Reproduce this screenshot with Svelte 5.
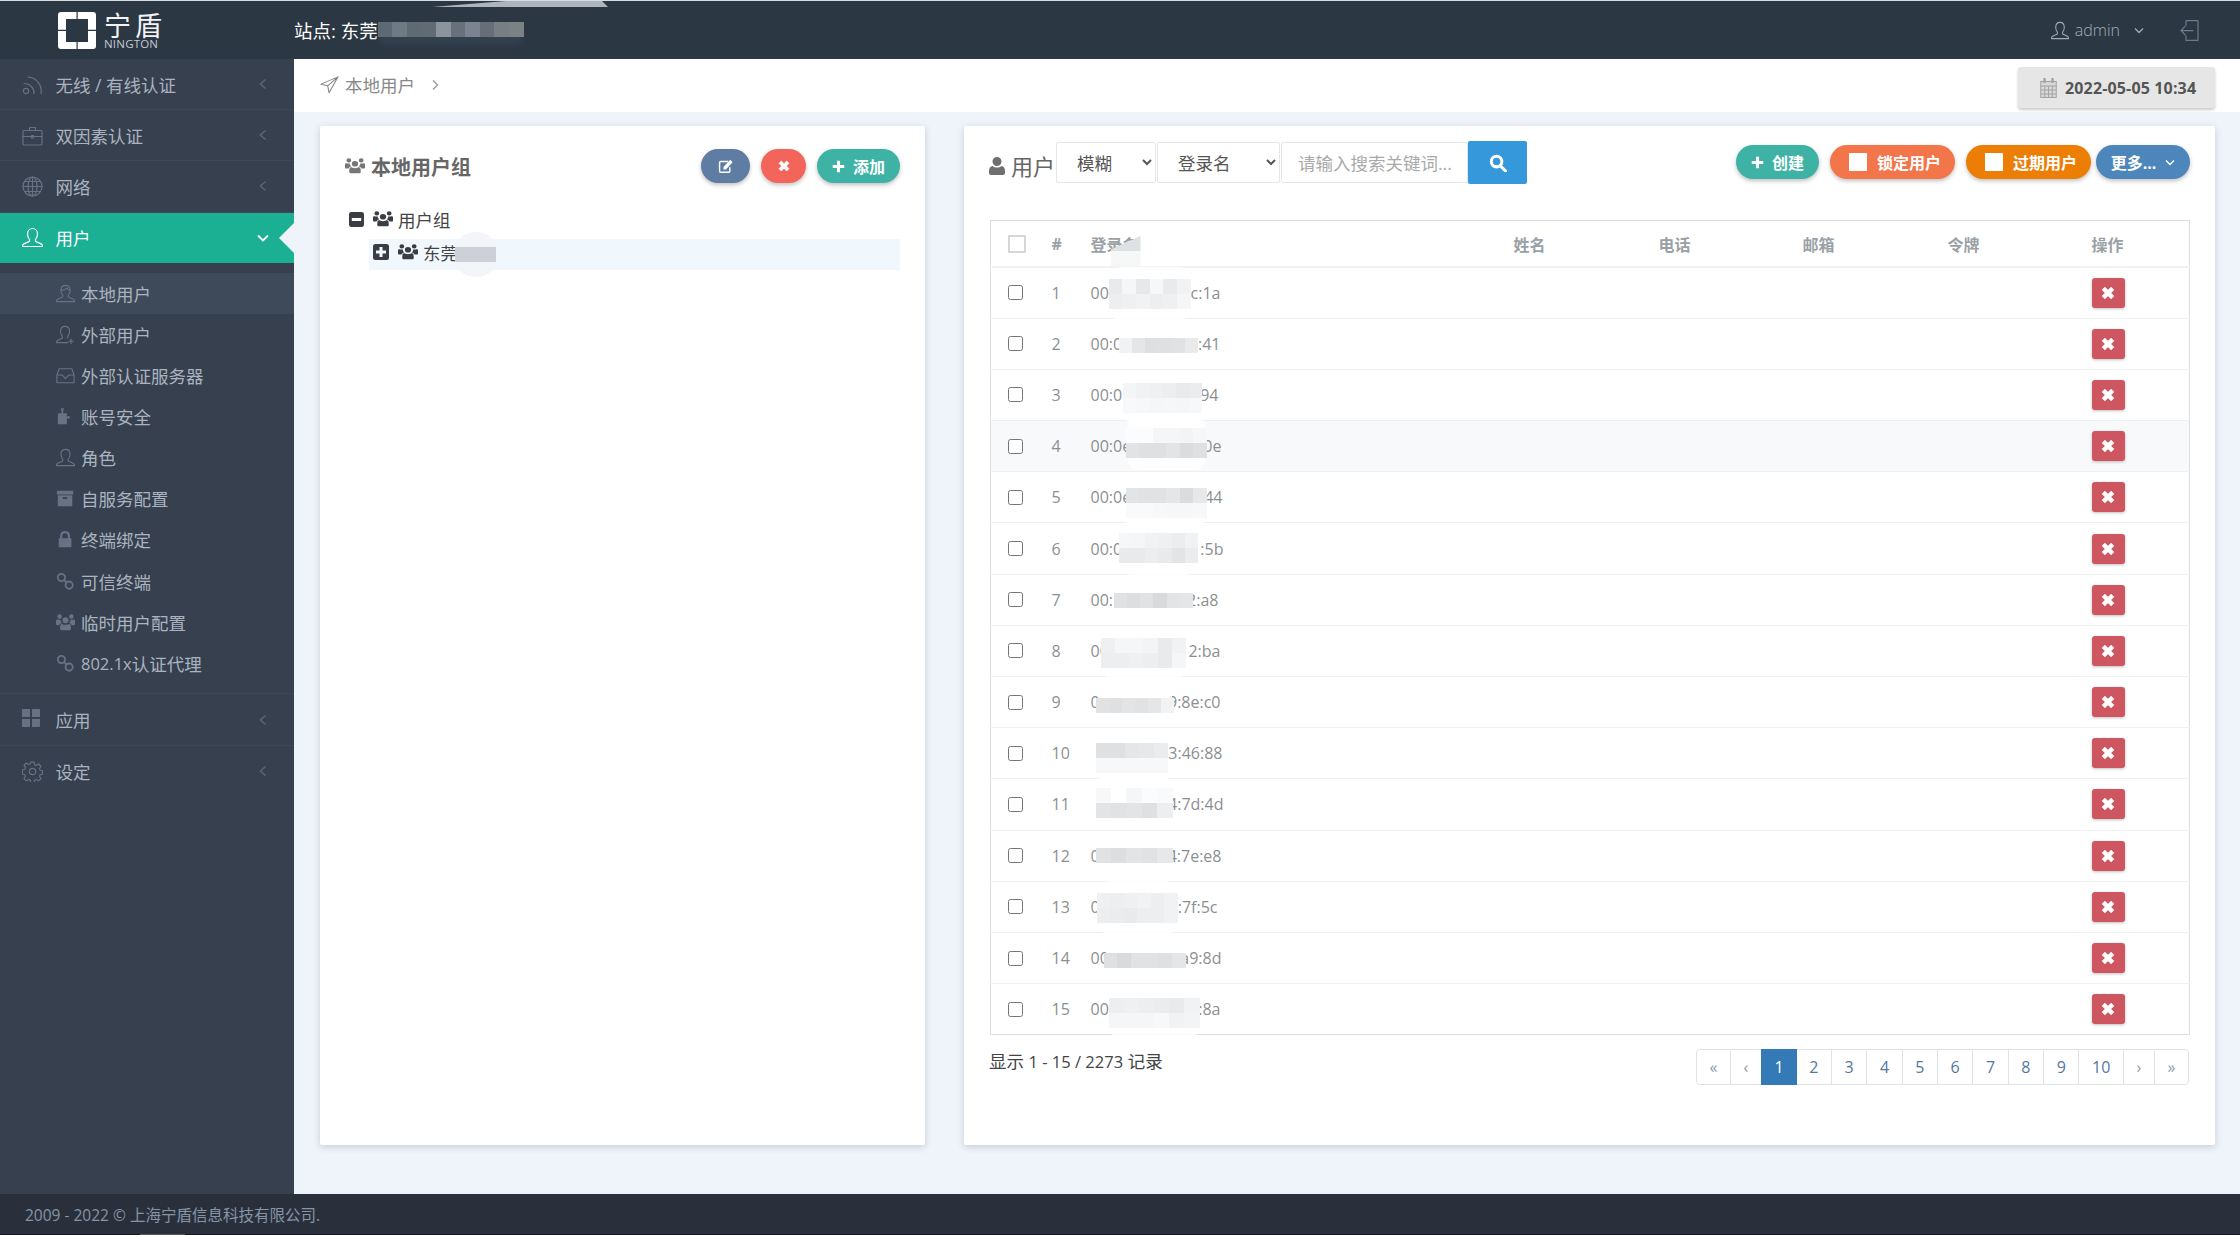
<script lang="ts">
  const line = 'fill="none" stroke="currentColor" stroke-width="1.2" stroke-linejoin="round" stroke-linecap="round"';
  const userShape = 'M10.5 1.5c-3 0-5 2.4-5 5.6 0 2.1.8 4 2 5.2v2.1l-5.6 2.5c-1 .5-1.4 1.4-1.4 2.6h20c0-1.2-.4-2.1-1.4-2.6l-5.6-2.5v-2.1c1.2-1.200 2-3.100 2-5.200 0-3.200-2-5.600-5-5.600z';
  const icons: Record<string, string> = {
    rss: `<g ${line}><circle cx="4" cy="17" r="2.6"/><path d="M2 9.500a9.500 9.500 0 0 1 10 10"/><path d="M6 3a14 14 0 0 1 13 16.500"/></g>`,
    case: `<g ${line}><rect x="1" y="5.500" width="19" height="14.500" rx="1"/><path d="M7.500 5.500V2.500h6v3M1 11.500h19M9.500 10.500h2v2.500h-2z"/></g>`,
    globe: `<g ${line}><circle cx="10.500" cy="10.500" r="9.500"/><ellipse cx="10.500" cy="10.500" rx="4.500" ry="9.500"/><path d="M10.500 1v19M1 10.500h19M2.500 5.500h16M2.500 15.500h16"/></g>`,
    user: `<path ${line} d="${userShape}"/>`,
    female: `<g ${line}><path d="${userShape}"/><path d="M5.500 7c3 0 5-1 6.500-2.500 1 1.500 2 2.200 3.500 2.500"/></g>`,
    follow: `<g ${line}><path d="M10 1.500c-3 0-5 2.400-5 5.600 0 2.100.8 4 2 5.200v2.100l-5 2.500c-1 .5-1.400 1.400-1.400 2.600h12"/><path d="M10 1.500c3 0 5 2.400 5 5.600 0 2.100-.8 4-2 5.200v2M16.500 15.500v5M14 18h5"/></g>`,
    inbox: `<g ${line}><path d="M3.500 3h14l2.500 7v8.500H1V10zM1 10h6l3.500 4 3.500-4h6"/></g>`,
    puzzle: `<path fill="currentColor" d="M2 7h4V4.500C6 3 5 3 5.500 1.500h3C9 3 8 3 8 4.500V7h4v3.500c1.500 0 1.500-1 3-.5v3c-1.500.5-1.500-.5-3-.5V19H2z"/>`,
    archive: `<path fill="currentColor" d="M1 2h18v4H1zM2 7h16v12H2zM7.500 9v2h5V9z" fill-rule="evenodd"/>`,
    lock: `<path fill="currentColor" fill-rule="evenodd" d="M3 9h1.500V6.500a5.500 5.500 0 0 1 11 0V9H17v10H3zM7 9h6V6.500a3 3 0 0 0-6 0z"/>`,
    link: `<g fill="none" stroke="currentColor" stroke-width="2"><circle cx="6" cy="6" r="4"/><circle cx="14.500" cy="14.500" r="4"/><path d="M8.500 8.500l3.500 3.500"/></g>`,
    users: `<path fill="currentColor" d="M10.500 4.600a3.300 3.300 0 1 1 0 6.600 3.300 3.300 0 0 1 0-6.600zM4 1.500a2.500 2.500 0 1 1 0 5 2.500 2.500 0 0 1 0-5zM17 1.500a2.500 2.500 0 1 1 0 5 2.500 2.500 0 0 1 0-5zM0 8.500c0-1 1-1.500 2-1.200.8.400 1.700.4 2.700 0 .2 1.500.8 2.700 1.800 3.500-1.300.5-2.300 1.400-2.800 2.700H1c-.6 0-1-.5-1-1zM21 8.500c0-1-1-1.500-2-1.200-.8.400-1.700.4-2.700 0-.2 1.500-.8 2.700-1.800 3.500 1.300.5 2.300 1.400 2.800 2.700H20c.6 0 1-.5 1-1zM6.500 11.800c1 .9 2.500 1.300 4 1.300s3-.4 4-1.300c1.200.4 2 1.800 2 3.700v2c0 1-.7 1.500-1.500 1.500H6c-.8 0-1.500-.5-1.500-1.500v-2c0-1.900.8-3.300 2-3.700z"/>`,
    grid: `<path fill="currentColor" d="M0 1a1 1 0 0 1 1-1h7v8H0zM10 0h7a1 1 0 0 1 1 1v7h-8zM0 10h8v8H1a1 1 0 0 1-1-1zM10 10h8v7a1 1 0 0 1-1 1h-7z"/>`,
    gear: `<g ${line}><circle cx="10.500" cy="10.500" r="3.200"/><path d="M8.800 1h3.400l.6 2.700 1.700.7 2.400-1.500 2.400 2.400-1.500 2.400.7 1.700 2.500.6v3.400l-2.500.6-.7 1.700 1.500 2.400-2.400 2.400-2.400-1.500-1.700.7-.6 2.700H8.800l-.6-2.700-1.700-.7-2.400 1.500-2.400-2.400 1.500-2.400-.7-1.700-2.500-.6V9l2.500-.6.7-1.700-1.500-2.400 2.400-2.400 2.400 1.500 1.700-.7z" transform="scale(.96) translate(.4 .2)"/></g>`,
    plane: `<g ${line}><path d="M20 1L1 9.500l7.500 2 1.500 8zM20 1L8.500 11.500"/></g>`,
    calendar: `<g fill="none" stroke="currentColor" stroke-width="1.100"><rect x=".8" y="3.500" width="16.400" height="16" fill="currentColor" fill-opacity=".2"/><path d="M.8 8h16.400M.8 12h16.400M.8 16h16.400M5 8v11.500M9 8v11.500M13 8v11.500"/></g><path fill="currentColor" d="M3.500 0h2.500v5H3.500zM12 0h2.500v5H12z"/>`,
    logout: `<g ${line}><path d="M7 6V1.500h12V20.500H7V16M14 11H2M6 7l-4 4 4 4"/></g>`,
    edit: `<path fill="none" stroke="currentColor" stroke-width="1.800" d="M13 3H3.500A1.500 1.500 0 0 0 2 4.500v10A1.500 1.500 0 0 0 3.500 16h10a1.500 1.500 0 0 0 1.500-1.500V10"/><path fill="currentColor" d="M15.500 1l3 3L10 12.500H7V9.500z"/>`,
    times: `<path fill="currentColor" stroke="currentColor" stroke-width="1" stroke-linejoin="round" d="M1.500 5L5 1.500 9 5.500 13 1.500 16.500 5 12.500 9 16.500 13 13 16.500 9 12.500 5 16.500 1.500 13 5.500 9z"/>`,
    plus: `<path fill="currentColor" d="M6.500 1h4v5.500H16v4h-5.500V16h-4v-5.500H1v-4h5.500z"/>`,
    search: `<g fill="none" stroke="currentColor" stroke-width="3.200"><circle cx="8" cy="8" r="5.600"/><path d="M12 12.500l5.500 5.500" stroke-linecap="round"/></g>`,
    person: `<path fill="currentColor" d="M8 1a4.500 4.500 0 1 1 0 9 4.500 4.500 0 0 1 0-9zM3.500 10c1.200 1 2.800 1.500 4.500 1.500s3.300-.5 4.500-1.500c2 .3 3.500 2.200 3.500 5v2c0 1.200-.9 2-2 2H2c-1.100 0-2-.8-2-2v-2c0-2.800 1.500-4.700 3.500-5z"/>`,
    box: `<path fill="currentColor" fill-rule="evenodd" d="M2.500 0h11A2.500 2.500 0 0 1 16 2.500v11a2.500 2.500 0 0 1-2.500 2.500h-11A2.500 2.500 0 0 1 0 13.500v-11A2.500 2.500 0 0 1 2.500 0zM3 6.500v3h10v-3z"/>`,
    boxplus: `<path fill="currentColor" fill-rule="evenodd" d="M2.500 0h11A2.500 2.500 0 0 1 16 2.500v11a2.500 2.500 0 0 1-2.500 2.500h-11A2.500 2.500 0 0 1 0 13.500v-11A2.500 2.500 0 0 1 2.500 0zM6.500 3v3.500H3v3h3.500V13h3V9.500H13v-3H9.500V3z"/>`
  };

  const top1 = [
    { icon: 'rss', label: '无线 / 有线认证' },
    { icon: 'case', label: '双因素认证' },
    { icon: 'globe', label: '网络' }
  ];
  const subs = [
    { icon: 'female', label: '本地用户', current: true },
    { icon: 'follow', label: '外部用户' },
    { icon: 'inbox', label: '外部认证服务器' },
    { icon: 'puzzle', label: '账号安全' },
    { icon: 'user', label: '角色' },
    { icon: 'archive', label: '自服务配置' },
    { icon: 'lock', label: '终端绑定' },
    { icon: 'link', label: '可信终端' },
    { icon: 'users', label: '临时用户配置' },
    { icon: 'link', label: '802.1x', tail: '认证代理' }
  ];
  const top2 = [
    { icon: 'grid', label: '应用' },
    { icon: 'gear', label: '设定' }
  ];

  // prefix, suffix, text end x, mosaic x / y / width, tile tones
  const rows = [
    { pre: '00:', suf: 'c:1a', end: 1220, x: 1108, y: 277, w: 82, tiles: [[232, 244, 230, 245, 232, 240], [236, 238, 240, 236, 238, 244]] },
    { pre: '00:0', suf: ':41', end: 1220, x: 1118, y: 337, w: 80, tiles: [[240, 228, 221, 222, 224, 232]] },
    { pre: '00:0', suf: '94', end: 1218, x: 1122, y: 382, w: 80, tiles: [[243, 240, 238, 236, 232, 234], [247, 246, 244, 245, 244, 246]] },
    { pre: '00:0e', suf: '0e', end: 1221, x: 1125, y: 427, w: 81, tiles: [[250, 250, 244, 244, 242, 245], [225, 222, 222, 226, 218, 222]] },
    { pre: '00:0e', suf: '44', end: 1222, x: 1125, y: 487, w: 81, tiles: [[226, 224, 224, 228, 218, 230], [248, 248, 246, 245, 245, 246]] },
    { pre: '00:0', suf: ':5b', end: 1223, x: 1118, y: 532, w: 80, tiles: [[245, 244, 240, 238, 235, 240], [232, 232, 235, 232, 226, 234]] },
    { pre: '00:', suf: '2:a8', end: 1218, x: 1113, y: 592, w: 80, tiles: [[224, 220, 224, 216, 226, 228]] },
    { pre: '00', suf: '2:ba', end: 1220, x: 1100, y: 637, w: 86, tiles: [[238, 244, 244, 242, 232, 240], [236, 236, 238, 236, 232, 244]] },
    { pre: '0', suf: '9:8e:c0', end: 1220, x: 1095, y: 697, w: 78, tiles: [[224, 222, 226, 224, 228, 240]] },
    { pre: '', suf: '3:46:88', end: 1222, x: 1095, y: 742, w: 73, tiles: [[222, 222, 228, 230, 234], [246, 246, 246, 246, 246]] },
    { pre: '', suf: '4:7d:4d', end: 1223, x: 1095, y: 787, w: 77, tiles: [[246, 255, 244, 250, 248], [226, 224, 226, 222, 236]] },
    { pre: '0', suf: '4:7e:e8', end: 1221, x: 1095, y: 847, w: 77, tiles: [[224, 220, 226, 224, 230]] },
    { pre: '0', suf: ':7f:5c', end: 1217, x: 1096, y: 892, w: 81, tiles: [[238, 236, 238, 240, 236, 240], [236, 234, 232, 236, 236, 240]] },
    { pre: '00', suf: 'a9:8d', end: 1221, x: 1103, y: 952, w: 82, tiles: [[222, 216, 224, 224, 222, 228]] },
    { pre: '00', suf: ':8a', end: 1220, x: 1108, y: 997, w: 91, tiles: [[236, 238, 236, 234, 232, 240], [244, 244, 244, 246, 240, 242]] }
  ];
  const siteTiles = ['#5d6a75', '#6e7b84', '#5f6a72', '#606b73', '#8b949e', '#68707b', '#7c8390', '#676e79', '#777f85', '#7b8184'];
  const pages = ['«', '‹', '1', '2', '3', '4', '5', '6', '7', '8', '9', '10', '›', '»'];
</script>

{#snippet icon(name: string, w: number, h: number, vb = '0 0 21 21')}
  <svg class="ico" width={w} height={h} viewBox={vb} preserveAspectRatio="none" aria-hidden="true">{@html icons[name]}</svg>
{/snippet}

{#snippet chevron(cls: string)}
  <svg class={cls} width="10" height="12" viewBox="0 0 10 12" aria-hidden="true"><path d="M7.500 1.500L2.500 6l5 4.500" fill="none" stroke="currentColor" stroke-width="1.600"/></svg>
{/snippet}

{#snippet mainItem(item: { icon: string; label: string })}
  <a class="item">
    <span class="item-ico">{@render icon(item.icon, 21, 21)}</span>
    <span>{item.label}</span>
    {@render chevron('arrow')}
  </a>
{/snippet}

<div class="app">
  <header class="topbar">
    <div class="logo">
      <svg class="logo-mark" width="38" height="37" viewBox="0 0 38 37" aria-hidden="true">
        <path fill="#fff" fill-rule="evenodd" d="M3 0h32a3 3 0 0 1 3 3v31a3 3 0 0 1-3 3H3a3 3 0 0 1-3-3V3a3 3 0 0 1 3-3zM8 7v23h22V7z"/>
        <path fill="#2c3744" d="M18.500 0h1.200v7h-1.200zM18.500 30h1.200v7h-1.200zM0 17.800h8V19H0zM30 17.800h8V19h-8z"/>
      </svg>
      <div class="logo-text">
        <span class="logo-cn">宁盾</span>
        <span class="logo-en">NINGTON</span>
      </div>
    </div>
    <div class="site">
      <span>站点: 东莞</span>
      <span class="site-mask">
        {#each siteTiles as t}<i style="background:{t}"></i>{/each}
      </span>
    </div>
    <svg class="scrap" width="180" height="7" viewBox="0 0 180 7" aria-hidden="true"><path fill="#aeb4bf" d="M0 6L74 0h96l6 6z"/></svg>
    <div class="top-right">
      <span class="admin">{@render icon('user', 18, 19)} admin
        <svg width="10" height="7" viewBox="0 0 10 7" aria-hidden="true"><path d="M1 1.500l4 4 4-4" fill="none" stroke="currentColor" stroke-width="1.300"/></svg>
      </span>
      <span class="logout">{@render icon('logout', 21, 22)}</span>
    </div>
  </header>

  <div class="body">
    <aside class="sidebar">
      {#each top1 as item}
        {@render mainItem(item)}
      {/each}
      <a class="item active">
        <span class="item-ico">{@render icon('user', 21, 21)}</span>
        <span>用户</span>
        <svg class="arrow-down" width="12" height="8" viewBox="0 0 12 8" aria-hidden="true"><path d="M1 1.500l5 5 5-5" fill="none" stroke="currentColor" stroke-width="1.800"/></svg>
      </a>
      <nav class="submenu">
        {#each subs as s}
          <a class="sub" class:current={s.current}>
            <span class="sub-ico">{@render icon(s.icon, 19, 19)}</span>
            <span class:latin={s.tail}>{s.label}</span>{#if s.tail}<span>{s.tail}</span>{/if}
          </a>
        {/each}
      </nav>
      {#each top2 as item}
        {@render mainItem(item)}
      {/each}
    </aside>

    <main class="main">
      <div class="crumbs">
        <div class="crumb-path">
          {@render icon('plane', 19, 18)}
          <span>本地用户</span>
          <svg width="8" height="12" viewBox="0 0 8 12" aria-hidden="true"><path d="M2 1.500L6.500 6 2 10.500" fill="none" stroke="currentColor" stroke-width="1.300"/></svg>
        </div>
        <div class="date">{@render icon('calendar', 17, 20, '0 0 18 20')} 2022-05-05 10:34</div>
      </div>

      <div class="cards">
        <section class="card groups">
          <div class="groups-head">
            <h3>{@render icon('users', 20, 18)} 本地用户组</h3>
            <div class="btns">
              <button class="pill edit">{@render icon('edit', 15, 15, '0 0 19 18')}</button>
              <button class="pill del">{@render icon('times', 12, 12, '0 0 18 18')}</button>
              <button class="pill add">{@render icon('plus', 13, 13, '0 0 17 17')} 添加</button>
            </div>
          </div>
          <div class="tree">
            <div class="node root">
              {@render icon('box', 15, 15, '0 0 16 16')}
              {@render icon('users', 20, 18)}
              <span>用户组</span>
            </div>
            <div class="node child">
              {@render icon('boxplus', 16, 16, '0 0 16 16')}
              {@render icon('users', 20, 18)}
              <span>东莞</span>
              <span class="node-blur"><i></i></span>
            </div>
          </div>
        </section>

        <section class="card users">
          <div class="toolbar">
            <h3>{@render icon('person', 16, 19, '0 0 16 19')} 用户</h3>
            <select class="match"><option>模糊</option></select>
            <select class="field"><option>登录名</option></select>
            <input class="search" placeholder="请输入搜索关键词..." />
            <button class="search-btn" aria-label="搜索">{@render icon('search', 18, 18, '0 0 19 19')}</button>
            <div class="actions">
              <button class="pill add create">{@render icon('plus', 13, 13, '0 0 17 17')} 创建</button>
              <button class="pill lock"><b class="sq"></b>锁定用户</button>
              <button class="pill expire"><b class="sq"></b>过期用户</button>
              <button class="pill more">更多...
                <svg width="10" height="7" viewBox="0 0 10 7" aria-hidden="true"><path d="M1 1.500l4 4 4-4" fill="none" stroke="currentColor" stroke-width="1.400"/></svg>
              </button>
            </div>
          </div>

          <table>
            <colgroup>
              <col style="width:50px" /><col style="width:40px" /><col style="width:423px" /><col style="width:145px" />
              <col style="width:144px" /><col style="width:145px" /><col style="width:144px" /><col style="width:108px" />
            </colgroup>
            <thead>
              <tr>
                <th class="cb"><span class="check-head"></span></th>
                <th class="num">#</th>
                <th class="login">登录名<span class="head-mask"></span></th>
                <th>姓名</th><th>电话</th><th>邮箱</th><th>令牌</th><th>操作</th>
              </tr>
            </thead>
            <tbody>
              {#each rows as r, i}
                <tr class:hover={i === 3}>
                  <td class="cb"><input type="checkbox" /></td>
                  <td class="num">{i + 1}</td>
                  <td class="login">
                    <div class="mac" style="width:{r.end - 1090}px"><span>{r.pre}</span><span>{r.suf}</span></div>
                    <div class="mask" style="left:{r.x - 1080}px; top:{r.y - 266 - 51.2 * i}px; width:{r.w}px">
                      {#each r.tiles as tr}
                        <div class="tile-row">
                          {#each tr as t}<i style="background:rgb({t},{t + 2},{t + 3})"></i>{/each}
                        </div>
                      {/each}
                    </div>
                  </td>
                  <td></td><td></td><td></td><td></td>
                  <td><button class="row-del" aria-label="删除">{@render icon('times', 14, 14, '0 0 18 18')}</button></td>
                </tr>
              {/each}
            </tbody>
          </table>

          <div class="table-foot">
            <span class="count">显示 <span class="latin">1 - 15 / 2273</span> 记录</span>
            <ul class="pager">
              {#each pages as p}
                <li class:on={p === '1'} class:sym={isNaN(Number(p))}>{p}</li>
              {/each}
            </ul>
          </div>
        </section>
      </div>
    </main>
  </div>

  <footer class="foot">2009 - 2022 © 上海宁盾信息科技有限公司.</footer>
</div>

<style>
  :global(body) { margin: 0; background: #eff3fa; }
  .app {
    height: 100vh;
    min-height: 1235px;
    display: flex;
    flex-direction: column;
    font-family: "Open Sans", "Noto Sans CJK SC", sans-serif;
    font-size: 17.5px;
    color: #555;
    overflow: hidden;
  }
  .ico { flex: none; display: inline-block; vertical-align: -2px; }
  .latin { font-size: 16.500px; }

  .topbar {
    flex: 0 0 59px;
    box-sizing: border-box;
    position: relative;
    display: flex;
    align-items: center;
    background: #2c3744;
    border-top: 1px solid #d9dce0;
    color: #fff;
  }
  .logo { width: 294px; display: flex; align-items: center; padding-left: 58px; box-sizing: border-box; gap: 8px; }
  .logo-mark { flex: none; }
  .logo-text { display: flex; flex-direction: column; line-height: 1; }
  .logo-cn { font-size: 27px; height: 27px; line-height: 27px; letter-spacing: 4px; color: #f2f3f5; }
  .logo-en { font-size: 11.500px; line-height: 10px; height: 10px; color: #c4c9ce; letter-spacing: .2px; }
  .site { display: flex; align-items: center; font-size: 18.500px; position: relative; }
  .site-mask { display: flex; height: 15px; width: 146px; margin-top: -1px; box-shadow: 0 9px 6px -2px #354250; }
  .site-mask i { flex: 1; }
  .scrap { position: absolute; left: 432px; top: 0; }
  .top-right { margin-left: auto; display: flex; align-items: center; color: #a3acb8; }
  .admin { display: flex; align-items: center; gap: 6px; font-size: 16px; font-weight: 300; }
  .admin svg:last-child { margin-left: 8px; }
  .logout { margin: 0 40px 0 35px; color: #6d7a8a; display: flex; }

  .body { flex: 1; display: flex; min-height: 0; }
  .sidebar { flex: 0 0 294px; background: #36404f; color: #aab3bf; }
  .item {
    height: 51.200px;
    box-sizing: border-box;
    display: flex;
    align-items: center;
    position: relative;
    border-bottom: 1px solid #3d4757;
    padding-left: 22px;
    font-size: 17.500px;
  }
  .item:last-child { border-bottom: 0; }
  .item-ico { width: 33.500px; color: #667282; display: flex; }
  .arrow { position: absolute; left: 258px; color: #596575; }
  .item.active { background: #1bb094; color: #fff; height: 50px; border: 0; }
  .item.active .item-ico { color: #fff; }
  .item.active::after {
    content: "";
    position: absolute;
    right: 0;
    top: 10px;
    border-style: solid;
    border-width: 15px 15px 15px 0;
    border-color: transparent #eff3fa transparent transparent;
  }
  .arrow-down { position: absolute; left: 257px; color: #fff; }
  .submenu { padding: 10px 0 9.500px; border-bottom: 1px solid #3d4757; }
  .sub { height: 41.150px; display: flex; align-items: center; padding-left: 56px; position: relative; }
  .sub.current { background: #3e4a5a; }
  .sub-ico { width: 25px; color: #677384; display: flex; }

  .main { flex: 1; min-width: 0; display: flex; flex-direction: column; }
  .crumbs {
    flex: 0 0 53px;
    background: #fff;
    display: flex;
    align-items: center;
    justify-content: space-between;
    padding: 0 25px 0 26px;
  }
  .crumb-path { display: flex; align-items: center; gap: 6px; color: #888; padding-bottom: 2px; }
  .crumb-path svg:last-child { margin-left: 10px; color: #999; }
  .date {
    width: 197px;
    height: 41px;
    margin-top: 4px;
    box-sizing: border-box;
    padding-left: 22px;
    display: flex;
    align-items: center;
    gap: 8px;
    background: #e6e6e6;
    border-radius: 3px;
    box-shadow: 0 2px 3px rgba(0, 0, 0, .2);
    font-size: 16px;
    letter-spacing: .15px;
    font-weight: 700;
    color: #555;
    white-space: nowrap;
  }
  .date .ico { color: #a4a4a4; }

  .cards { display: flex; gap: 39px; padding: 14px 26px 0; }
  .card {
    height: 1019px;
    box-sizing: border-box;
    background: #fff;
    border-radius: 2px;
    box-shadow: 0 2px 7px rgba(60, 70, 100, .22);
  }
  h3 { margin: 0; font-weight: 700; }
  .groups { flex: 0 0 605px; padding: 23px 25px 0; }
  .groups-head { display: flex; justify-content: space-between; align-items: center; height: 34px; }
  .groups-head h3 { font-size: 20px; color: #666; display: flex; align-items: center; gap: 6px; }
  .groups-head h3 .ico { color: #777; }
  .btns { display: flex; gap: 11px; }
  .pill {
    height: 34px;
    border: 0;
    border-radius: 17px;
    color: #fff;
    font: 700 16px "Open Sans", "Noto Sans CJK SC", sans-serif;
    display: flex;
    align-items: center;
    justify-content: center;
    padding: 0;
    box-shadow: 0 2px 4px rgba(0, 0, 0, .25);
  }
  .edit { width: 49px; background: #5f7ca3; }
  .del { width: 45px; background: #f3655a; }
  .add { width: 83px; background: #3fb2a6; gap: 8px; }
  .tree { margin-top: 21px; font-size: 17.500px; color: #444; }
  .node { display: flex; align-items: center; position: relative; }
  .node .ico { color: #3a3d44; }
  .root { height: 30px; padding-left: 4px; gap: 9px; margin-bottom: 5px; }
  .root span { margin-left: -4px; }
  .child { height: 31px; margin-left: 24px; background: #f0f7fd; padding-left: 4px; gap: 9px; padding-bottom: 5px; box-sizing: border-box; }
  .child span { margin-left: -4px; }
  .child .node-blur { position: absolute; left: 86px; top: -7px; width: 42px; height: 45px; border-radius: 20px; background: #f3f5f8; margin: 0; }
  .node-blur i { position: absolute; left: 0; top: 15px; width: 41px; height: 15px; background: #cdd1d7; }

  .users { flex: 0 0 1250px; padding: 15px 25px 0; }
  .toolbar { display: flex; align-items: center; height: 43px; }
  .toolbar h3 { font-size: 22px; font-weight: 400; color: #666; display: flex; align-items: center; gap: 6px; width: 67px; flex: none; white-space: nowrap; margin-top: 5px; }
  .toolbar h3 .ico { color: #6f6f6f; }
  select, .search {
    height: 41px;
    box-sizing: border-box;
    border: 1px solid #e5e6e7;
    background: #fff;
    color: #555;
    font: 17.500px "Open Sans", "Noto Sans CJK SC", sans-serif;
    border-radius: 2px;
    outline: none;
    margin-right: 1px;
  }
  .match { width: 100px; padding-left: 16px; }
  .field { width: 123px; padding-left: 16px; }
  .search { width: 187px; padding: 0 16px; margin: 0; }
  .search::placeholder { color: #a9a9a9; }
  .search-btn {
    width: 59px;
    height: 43px;
    border: 0;
    border-radius: 2px;
    background: #3498db;
    color: #fff;
    padding: 0;
    display: flex;
    align-items: center;
    justify-content: center;
  }
  .actions { margin-left: auto; display: flex; align-items: center; margin-top: -1px; }
  .create { width: 83px; }
  .lock, .expire { width: 125px; gap: 10px; margin-left: 11px; justify-content: flex-start; padding-left: 19px; box-sizing: border-box; }
  .lock { background: #f3754a; }
  .expire { background: #ec7e06; }
  .sq { width: 18px; height: 18px; background: #fff; }
  .more { width: 94px; background: #4d86bb; margin-left: 5px; gap: 9px; }

  table {
    margin: 36px 0 0 1px;
    width: 1199px;
    table-layout: fixed;
    border-collapse: collapse;
    border: 1px solid #dcdfe2;
    font-size: 16px;
    color: #8c8f92;
  }
  th {
    height: 45px;
    padding: 0 10px;
    text-align: left;
    font-weight: 700;
    color: #9aa1a6;
    border-bottom: 2px solid #f1f2f3;
    font-size: 16px;
    position: relative;
  }
  td { height: 51.200px; box-sizing: border-box; padding: 0 10px; border-bottom: 1px solid #eef0f2; position: relative; }
  tbody tr:last-child td { border-bottom-color: #dcdfe2; }
  tr.hover td { background: #f7f9fb; }
  .num { padding-left: 11px; }
  .cb { padding: 0 0 0 17px; }
  .cb input { display: block; width: 15px; height: 15px; margin: 0; }
  .check-head { display: block; width: 18px; height: 18px; box-sizing: border-box; border: 2px solid #d5d7d9; }
  .mac { display: flex; justify-content: space-between; }
  .mask { position: absolute; z-index: 1; }
  .mask::before { content: ""; position: absolute; inset: -12px 2px; z-index: -1; background: rgba(255, 255, 255, .8); border-radius: 10px; }
  .tile-row { display: flex; height: 15px; }
  .tile-row i { flex: 1; }
  .head-mask {
    position: absolute;
    left: 30px;
    top: 15px;
    width: 30px;
    height: 30px;
    background: linear-gradient(#dfe2e4 0 50%, #f6f7f7 50%);
    clip-path: polygon(0 45%, 100% 0, 100% 100%, 0 100%);
  }
  .row-del {
    width: 33px;
    height: 30px;
    border: 0;
    border-radius: 3px;
    background: #cd5660;
    color: #fff;
    padding: 0;
    display: flex;
    align-items: center;
    justify-content: center;
    box-shadow: 0 1px 3px rgba(0, 0, 0, .25);
  }

  .table-foot { display: flex; justify-content: space-between; align-items: flex-start; width: 1200px; margin-top: 14px; }
  .count { color: #444; margin-top: -1px; }
  .pager {
    list-style: none;
    margin: 0;
    padding: 0;
    display: flex;
    font-size: 16px;
    color: #55779c;
    border: 1px solid #dfe2e5;
    border-radius: 4px;
    height: 36px;
    box-sizing: border-box;
  }
  .pager li { padding: 0 12.600px; line-height: 34px; border-right: 1px solid #dfe2e5; }
  .pager li:last-child { border-right: 0; }
  .pager .sym { color: #8b98a8; }
  .pager .on { background: #337ab7; color: #fff; margin: -1px 0 -1px -1px; line-height: 36px; border: 0; padding: 0 13px 0 13.500px; }

  .foot {
    flex: 0 0 41px;
    box-sizing: border-box;
    position: relative;
    display: flex;
    align-items: center;
    padding-left: 25px;
    background: #2a303b;
    border-bottom: 1px solid #14171c;
    color: #8694a6;
    font-size: 15.500px;
  }
  .foot::after { content: ""; position: absolute; left: 140px; bottom: -1px; width: 45px; height: 1px; background: #55585e; }
</style>
